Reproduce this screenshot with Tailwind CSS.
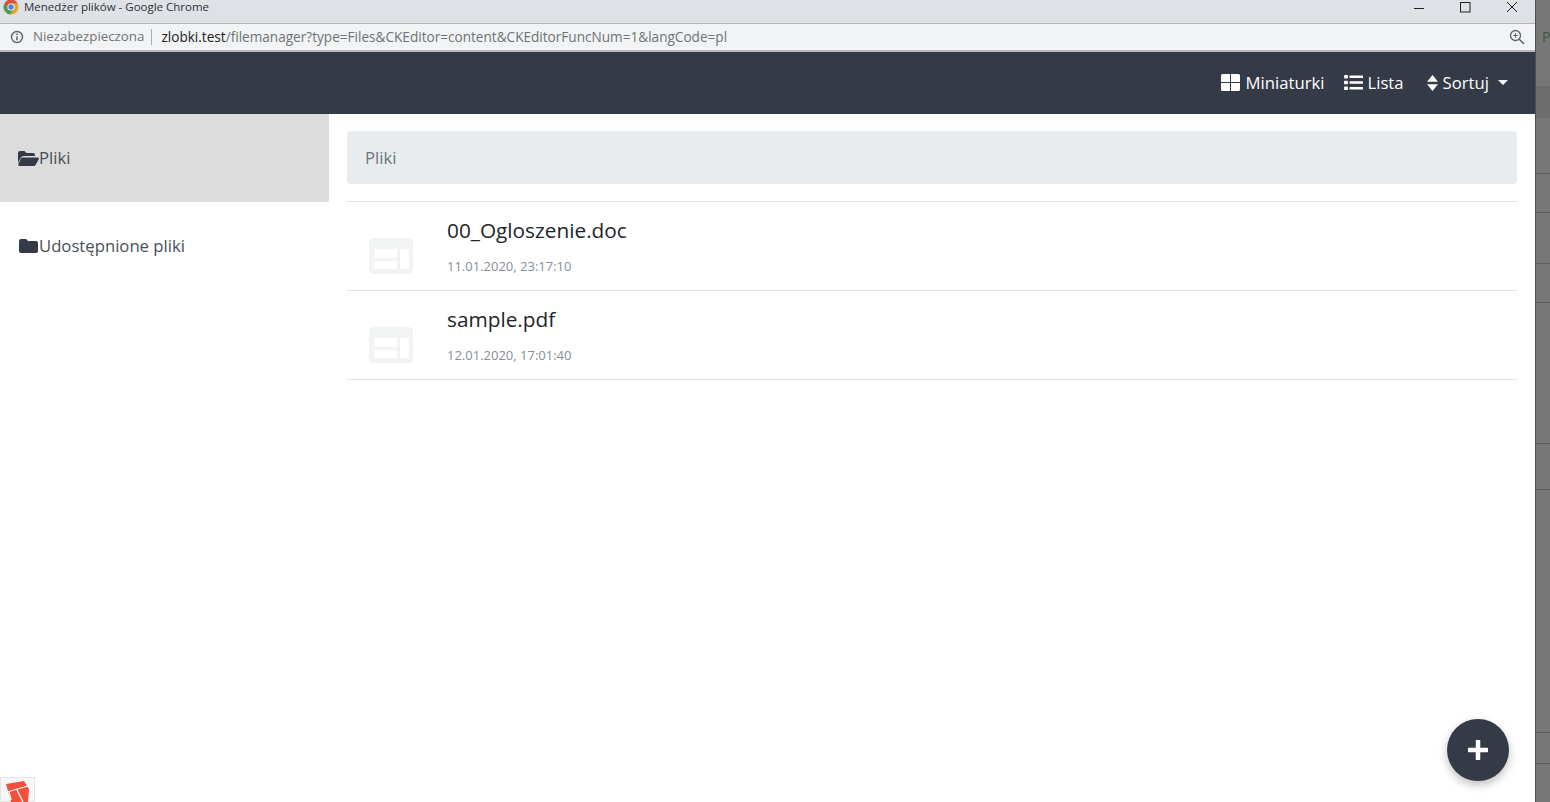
<!DOCTYPE html>
<html lang="pl">
<head>
    <meta charset="UTF-8">
    <title>Menedżer plików - Google Chrome</title>
    <script src="https://cdn.jsdelivr.net/npm/@tailwindcss/browser@4"></script>
</head>
<body class="h-[802px] w-[1550px] overflow-hidden bg-white font-['Open_Sans',sans-serif]">
<div class="flex h-[802px]">
    <!-- popup window -->
    <div class="relative flex w-[1535px] flex-col bg-white">
        <!-- title bar -->
        <div class="flex h-[24px] items-center justify-between border-b border-[#b4b6b8] bg-[#dee1e6] pb-[9px] pl-[3px]">
            <div class="flex items-center gap-[5px]">
                <svg width="16" height="16" viewBox="0 0 16 16">
                    <circle cx="8" cy="8" r="7.500" fill="#e0a92c"/>
                    <path d="M8 .5A7.5 7.5 0 0 0 1.600 4.200L4.600 9.500 8 4.600h6.600A7.500 7.500 0 0 0 8 .5z" fill="#d9503f"/>
                    <path d="M1.600 4.200A7.500 7.500 0 0 0 7 15.400l3-5-5.400-.9z" fill="#4c9a57"/>
                    <circle cx="8" cy="8" r="3.600" fill="#fff"/>
                    <circle cx="8" cy="8" r="2.700" fill="#4a84d8"/>
                </svg>
                <span class="text-[11.500px] text-[#303134]">Menedżer plików - Google Chrome</span>
            </div>
            <div class="flex items-center gap-[35px] pr-[17px]">
                <svg width="11" height="11" viewBox="0 0 11 11"><path d="M0 6.500h10" stroke="#222" stroke-width="1"/></svg>
                <svg width="11" height="11" viewBox="0 0 11 11"><rect x=".5" y=".5" width="9.500" height="9.500" fill="none" stroke="#222"/></svg>
                <svg width="12" height="12" viewBox="0 0 12 12"><path d="M1 1l10 10M11 1L1 11" stroke="#222" stroke-width="1"/></svg>
            </div>
        </div>
        <!-- address bar -->
        <div class="flex h-[28px] items-center border-b-2 border-[#b9bbbd] bg-[#f1f3f4] pl-[10px] pr-[10px]">
            <svg width="14" height="14" viewBox="0 0 14 14" class="mr-[9px]">
                <circle cx="7" cy="7" r="5.500" fill="none" stroke="#5f6368" stroke-width="1.400"/>
                <path d="M7 6.200v4M7 3.600v1.500" stroke="#5f6368" stroke-width="1.500"/>
            </svg>
            <span class="text-[13.300px] text-[#6f7377]">Niezabezpieczona</span>
            <span class="ml-[7px] mr-[9px] h-[16px] w-px bg-[#a9abad]"></span>
            <span class="pt-px text-[13.600px] text-[#6f7377]"><span class="text-[#202124]">zlobki.test</span>/filemanager?type=Files&amp;CKEditor=content&amp;CKEditorFuncNum=1&amp;langCode=pl</span>
            <svg width="16" height="16" viewBox="0 0 16 16" class="ml-auto">
                <circle cx="6.500" cy="6.500" r="5" fill="none" stroke="#5f6368" stroke-width="1.300"/>
                <path d="M10.200 10.200L15 15" stroke="#5f6368" stroke-width="1.600"/>
                <path d="M6.500 4.200v4.600M4.200 6.500h4.600" stroke="#5f6368" stroke-width="1"/>
            </svg>
        </div>
        <!-- navbar -->
        <nav class="flex h-[62px] items-center justify-end gap-[20px] bg-[#343a46] pr-[27px] text-[16.700px] text-white">
            <div class="flex items-center gap-[6px]">
                <svg width="19" height="17" viewBox="0 0 19 17" fill="#fff"><path d="M0 1.500A1.500 1.500 0 0 1 1.500 0H9v8H0zM10 0h7.500A1.500 1.500 0 0 1 19 1.500V8h-9zM0 9h9v8H1.500A1.500 1.500 0 0 1 0 15.500zM10 9h9v6.500a1.500 1.500 0 0 1-1.500 1.500H10z"/></svg>
                <span>Miniaturki</span>
            </div>
            <div class="flex items-center gap-[4px]">
                <svg width="19" height="15" viewBox="0 0 19 15" fill="#fff"><rect y="0" width="4" height="3.500" rx="1"/><rect y="5.700" width="4" height="3.500" rx="1"/><rect y="11.500" width="4" height="3.500" rx="1"/><rect x="5.500" y=".5" width="13.500" height="2.600" rx=".7"/><rect x="5.500" y="6.200" width="13.500" height="2.600" rx=".7"/><rect x="5.500" y="12" width="13.500" height="2.600" rx=".7"/></svg>
                <span>Lista</span>
            </div>
            <div class="ml-[3px] flex items-center gap-[5px]">
                <svg width="11" height="16" viewBox="0 0 11 16" fill="#fff"><path d="M5.500 0L11 6.800H0zM5.500 16L0 9.200h11z"/></svg>
                <span>Sortuj</span>
                <span class="ml-[4px] h-0 w-0 border-x-[5px] border-t-[5px] border-x-transparent border-t-white"></span>
            </div>
        </nav>
        <div class="flex flex-1">
            <!-- sidebar -->
            <aside class="w-[329px] text-[16.700px] text-[#495057]">
                <div class="flex h-[88px] items-center bg-[#dcdcdc] pl-[18px]">
                    <svg width="21" height="15" viewBox="0 0 21 15" fill="#343a46"><path d="M0 2a2 2 0 0 1 2-2h4.500l2 2H15a2 2 0 0 1 2 2v1H5.500a3 3 0 0 0-2.600 1.500L0 12zM4 6.500h15.500c1 0 1.700 1 1.200 1.900L17.500 14a2 2 0 0 1-1.700 1H1.500c-1 0-1.600-1-1.100-1.900L3 7.300a1.500 1.500 0 0 1 1-.8z"/></svg>
                    <span>Pliki</span>
                </div>
                <div class="flex h-[88px] items-center pl-[19px]">
                    <svg width="19" height="14" viewBox="0 0 19 14" fill="#343a46"><path d="M0 2a2 2 0 0 1 2-2h5l2 2h8a2 2 0 0 1 2 2v8a2 2 0 0 1-2 2H2a2 2 0 0 1-2-2z"/></svg>
                    <span class="ml-px">Udostępnione pliki</span>
                </div>
            </aside>
            <!-- content -->
            <main class="flex-1 px-[18px] pt-[17px]">
                <div class="flex h-[53px] items-center rounded-[4px] bg-[#e9ecef] pl-[18px] text-[16.700px] text-[#6c757d]">Pliki</div>
                <ul class="mt-[17px] border-t border-[#dee2e6]">
                    <li class="flex h-[89px] border-b border-[#dee2e6]">
                        <div class="w-[100px] pl-[22px] pt-[36px]">
                            <svg width="44" height="36" viewBox="0 0 44 36"><path fill-rule="evenodd" fill="#f2f4f4" d="M4 0h36a4 4 0 0 1 4 4v28a4 4 0 0 1-4 4H4a4 4 0 0 1-4-4V4a4 4 0 0 1 4-4zM5 11v9h23v-9zM5 23v8h23v-8zM31 11v20h9V11z"/></svg>
                        </div>
                        <div>
                            <div class="mt-[14px] text-[20.800px] leading-[29px] text-[#212529]">00_Ogloszenie.doc</div>
                            <div class="mt-[11px] text-[13px] leading-[20px] text-[#868e96]">11.01.2020, 23:17:10</div>
                        </div>
                    </li>
                    <li class="flex h-[89px] border-b border-[#dee2e6]">
                        <div class="w-[100px] pl-[22px] pt-[36px]">
                            <svg width="44" height="36" viewBox="0 0 44 36"><path fill-rule="evenodd" fill="#f2f4f4" d="M4 0h36a4 4 0 0 1 4 4v28a4 4 0 0 1-4 4H4a4 4 0 0 1-4-4V4a4 4 0 0 1 4-4zM5 11v9h23v-9zM5 23v8h23v-8zM31 11v20h9V11z"/></svg>
                        </div>
                        <div>
                            <div class="mt-[14px] text-[20.800px] leading-[29px] text-[#212529]">sample.pdf</div>
                            <div class="mt-[11px] text-[13px] leading-[20px] text-[#868e96]">12.01.2020, 17:01:40</div>
                        </div>
                    </li>
                </ul>
            </main>
        </div>
        <!-- add button -->
        <button class="absolute bottom-[21px] right-[26px] flex h-[62px] w-[62px] items-center justify-center rounded-full bg-[#343a46] shadow-[0_4px_10px_rgba(0,0,0,0.25)]">
            <svg width="20" height="20" viewBox="0 0 20 20"><path d="M10 1v18M1 10h18" stroke="#fff" stroke-width="4.500" stroke-linecap="round"/></svg>
        </button>
        <!-- laravel debug badge -->
        <div class="absolute bottom-0 left-0 flex h-[25px] w-[35px] items-start justify-center border border-[#e3e3e3] bg-[#f7f7f7] pt-[3px]">
            <svg width="24" height="21" viewBox="0 0 24 21"><path d="M0 3L18 0l5 8-1 13H5z" fill="#f4503a"/><path d="M1 11l21-6M5 19l-2-8M11 9l6 12" stroke="#fff" stroke-width="1.300" fill="none"/></svg>
        </div>
    </div>
    <!-- page behind the popup -->
    <div class="relative w-[15px] overflow-hidden border-l border-[#4f4f4f] bg-[#777777]">
        <span class="absolute left-[6px] top-[27px] text-[14px] leading-[20px] text-[#3c5a40]">P</span>
        <div class="absolute inset-x-0 top-[86px] h-[32px] bg-[#6d6d6d]"></div>
        <div class="absolute inset-x-0 top-[173px] h-px bg-[#5f5f5f]"></div>
        <div class="absolute inset-x-0 top-[212px] h-px bg-[#5f5f5f]"></div>
        <div class="absolute inset-x-0 top-[263px] h-px bg-[#5f5f5f]"></div>
        <div class="absolute inset-x-0 top-[302px] h-px bg-[#5f5f5f]"></div>
        <div class="absolute inset-x-0 top-[443px] h-px bg-[#5f5f5f]"></div>
        <div class="absolute inset-x-0 top-[489px] h-px bg-[#5f5f5f]"></div>
        <div class="absolute inset-x-0 top-[732px] h-px bg-[#5f5f5f]"></div>
        <div class="absolute inset-x-0 top-[763px] h-px bg-[#5f5f5f]"></div>
    </div>
</div>
</body>
</html>
